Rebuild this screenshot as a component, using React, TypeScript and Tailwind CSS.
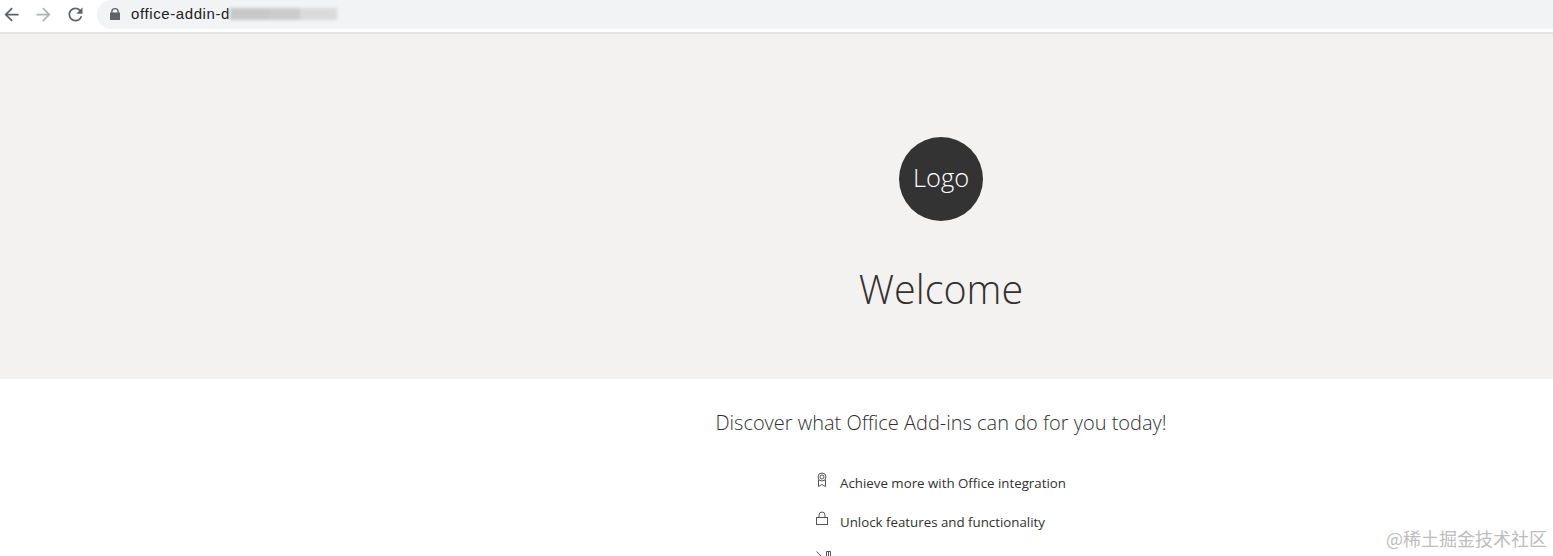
function NavIcon({ d, className }: { d: string; className: string }) {
  return (
    <svg width="21" height="21" viewBox="0 0 24 24" fill="currentColor" className={className}>
      <path d={d} />
    </svg>
  );
}

function RibbonIcon() {
  return (
    <svg width="12" height="16" viewBox="0 0 12 16" fill="none" stroke="#555" strokeWidth="1" className="shrink-0">
      <circle cx="6" cy="5" r="4" />
      <circle cx="6" cy="5" r="2" />
      <path d="M2.5 8v6.5L6 12.5l3.500 2V8" />
    </svg>
  );
}

function LockIcon() {
  return (
    <svg width="12" height="15" viewBox="0 0 12 15" fill="none" stroke="#555" strokeWidth="1" className="shrink-0">
      <rect x="0.5" y="6.500" width="11" height="7" />
      <path d="M3 6.500V4a3 3 0 0 1 6 0v2.500" />
    </svg>
  );
}

function DesignIcon() {
  return (
    <svg width="16" height="6" viewBox="0 0 16 6" fill="none" stroke="#555" strokeWidth="1" className="shrink-0">
      <path d="M0.500 0.500 6 6" />
      <path d="M10.500 6V0.500h4V6M12.500 1v5" />
    </svg>
  );
}

export default function App() {
  return (
    <div className="relative h-[556px] w-[1553px] overflow-hidden bg-white font-['Open_Sans',sans-serif]">
      <div className="flex h-[34px] items-center border-b-2 border-[#e4e4e2] bg-white">
        <div className="flex w-[97px] items-center gap-[11px] pb-[4px] pl-[1px]">
          <NavIcon d="M20 11H7.830l5.590-5.590L12 4l-8 8 8 8 1.410-1.410L7.830 13H20v-2z" className="text-[#5f6368]" />
          <NavIcon d="M4 11h12.170l-5.590-5.590L12 4l8 8-8 8-1.410-1.410L16.170 13H4v-2z" className="text-[#b0b3b6]" />
          <NavIcon
            d="M17.650 6.350A7.958 7.958 0 0 0 12 4c-4.420 0-7.990 3.580-7.990 8s3.570 8 7.990 8c3.730 0 6.840-2.550 7.730-6h-2.080A5.990 5.990 0 0 1 12 18c-3.310 0-6-2.690-6-6s2.690-6 6-6c1.660 0 3.140.690 4.220 1.780L13 11h7V4l-2.350 2.350z"
            className="text-[#5f6368]"
          />
        </div>
        <div className="mb-[4px] flex h-[29px] grow items-center rounded-l-full bg-[#f1f3f4] pl-[13px]">
          <svg width="10" height="12" viewBox="0 0 10 12" fill="#5f6368" className="shrink-0">
            <path d="M1.200 4.500V3.500a3.800 3.500 0 0 1 7.600 0v1H10V12H0V4.500h1.200zm1.400 0h4.800v-1a2.400 2.200 0 0 0-4.800 0v1z" />
          </svg>
          <span className="ml-[11px] w-[99px] shrink-0 overflow-hidden whitespace-nowrap pt-[1px] font-['Liberation_Sans',sans-serif] text-[15px] tracking-[0.6px] text-[#202124]">
            office-addin-d
          </span>
          <div className="flex h-[12px] blur-[1.5px]">
            <div className="w-[40px] bg-[#c8c8c8]" />
            <div className="w-[30px] bg-[#cccccc]" />
            <div className="w-[37px] bg-[#dadada]" />
          </div>
        </div>
      </div>

      <section className="flex h-[345px] flex-col items-center bg-[#f3f2f1] pl-[329px] pt-[103px]">
        <div className="flex h-[84px] w-[84px] items-center justify-center rounded-full bg-[#333333] pb-[3px]">
          <span className="text-[25.5px] font-light text-white">Logo</span>
        </div>
        <h1 className="mt-[40px] text-[39.5px] font-light leading-[56px] text-[#323130]">Welcome</h1>
      </section>

      <section className="flex flex-col items-center pl-[329px] pt-[28px]">
        <h2 className="text-[20px] font-light leading-[32px] text-[#323130]">Discover what Office Add-ins can do for you today!</h2>
        <ul className="mt-[33px] w-[250px] text-[13.3px] text-[#323130]">
          <li className="flex h-[39px] items-start gap-[11px]">
            <RibbonIcon />
            <span className="mt-[2px] pl-[1px] leading-[18px]">Achieve more with Office integration</span>
          </li>
          <li className="flex h-[39px] items-start gap-[11px]">
            <LockIcon />
            <span className="mt-[2px] pl-[1px] leading-[18px]">Unlock features and functionality</span>
          </li>
          <li className="flex items-start pt-[1px]">
            <DesignIcon />
          </li>
        </ul>
      </section>

      <div className="absolute bottom-[6px] right-[6px] font-['Noto_Sans_CJK_SC',sans-serif] text-[18px] leading-[24px] text-[#bdbdbd]">
        @稀土掘金技术社区
      </div>
    </div>
  );
}
